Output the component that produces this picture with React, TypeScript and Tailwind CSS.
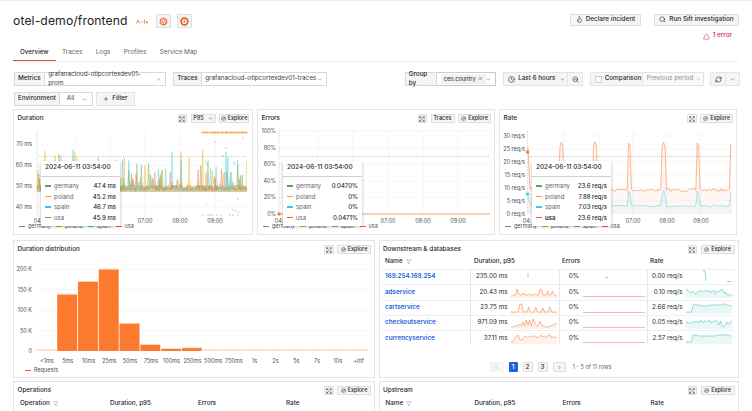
import React from "react";
import { ChevronDown, ChevronLeft, ChevronRight, Clock, Compass, Expand, Filter, Flame, Plus, RefreshCw, Search, Triangle, X, ZoomOut } from "lucide-react";

const C = { germany: "#56a64b", poland: "#f2a900", spain: "#38c5e0", usa: "#f2691f" };

function rng(seed: number) {
  let s = seed;
  return () => {
    s = (s * 16807) % 2147483647;
    return (s - 1) / 2147483646;
  };
}

function Compact({ label }: { label: string }) {
  return <span className="flex h-full items-center bg-[#f4f5f5] border border-[#d8d9dc] px-[3px] text-[6.3px] font-medium text-[#24292e]">{label}</span>;
}

function PanelBtn({ label, compass, caret, w }: { label: string; compass?: boolean; caret?: boolean; w: string }) {
  return (
    <span className={`flex h-[9.5px] items-center justify-center gap-[2px] rounded-[1px] border border-[#dcdde0] bg-[#f4f5f5] text-[5.5px] font-medium text-[#24292e] ${w}`}>
      {compass && <Compass size={5} strokeWidth={2} />}
      {label}
      {caret && <ChevronDown size={5} strokeWidth={2} className="ml-[2px]" />}
    </span>
  );
}

function ExpandBtn() {
  return (
    <span className="flex h-[9.5px] w-[9.5px] items-center justify-center rounded-[1px] border border-[#dcdde0] bg-[#f4f5f5] text-[#24292e]">
      <Expand size={6} strokeWidth={2} />
    </span>
  );
}

function PanelHead({ title, children }: { title: string; children: React.ReactNode }) {
  return (
    <div className="flex h-[14px] items-center justify-between pl-[3.5px] pr-[3px] pt-[3px]">
      <span className="text-[6.4px] font-medium text-[#24292e]">{title}</span>
      <div className="flex items-center gap-[3.5px]">{children}</div>
    </div>
  );
}

function Legend({ items }: { items: [string, string][] }) {
  return (
    <div className="flex h-[9px] items-center gap-[5px] pl-[5px] text-[5.5px] text-[#4a4f57]">
      {items.map(([n, c]) => (
        <span key={n} className="flex items-center gap-[3px]">
          <span className="h-[1px] w-[6px]" style={{ background: c }} />
          {n}
        </span>
      ))}
    </div>
  );
}

const SERIES: [string, string][] = [
  ["germany", C.germany],
  ["poland", C.poland],
  ["spain", C.spain],
  ["usa", C.usa],
];

function Tip({ left, rows, boldLast }: { left: string; rows: [string, string, string][]; boldLast?: boolean }) {
  return (
    <div className={`absolute top-[51px] h-[65px] w-[79px] bg-white shadow-[0_0.5px_3px_rgba(0,0,0,0.3)] ${left}`}>
      <div className="flex h-[15.5px] items-center border-b border-[#cfd0d3] pl-[4px] text-[6.4px] font-medium text-[#24292e]">2024-06-11 03:54:00</div>
      <div className="flex flex-col pt-[4px]">
        {rows.map(([n, c, v], i) => (
          <div key={n} className="flex h-[10.6px] items-center px-[4px] text-[6px]">
            <span className="mr-[3px] h-[1.5px] w-[6px]" style={{ background: c }} />
            <span className={boldLast && i === 3 ? "font-semibold text-[#24292e]" : "text-[#5f646c]"}>{n}</span>
            <span className="ml-auto font-medium text-[#24292e]">{v}</span>
          </div>
        ))}
      </div>
    </div>
  );
}

function Grid({ ys, xs, x0, x1, y0, y1 }: { ys: number[]; xs: number[]; x0: number; x1: number; y0: number; y1: number }) {
  return (
    <g stroke="#f0f0f2" strokeWidth="0.6">
      {ys.map((y) => <line key={y} x1={x0} x2={x1} y1={y} y2={y} />)}
      {xs.map((x) => <line key={x} x1={x} x2={x} y1={y0} y2={y1} />)}
    </g>
  );
}

function tick(x: number, y: number, t: string, anchor: "middle" | "end" = "middle") {
  return <text key={t + x + y} x={x} y={y} fontSize="5.5" fill="#4a4f57" textAnchor={anchor}>{t}</text>;
}

function durationSeries(seed: number, x0: number, x1: number, base: number, amp: number) {
  const r = rng(seed);
  const pts: [number, number][] = [];
  for (let x = x0; x <= x1; x += 0.9) {
    const v = r();
    let y = base + (r() - 0.5) * 6;
    if (v > 0.84) y -= r() * amp;
    pts.push([x, y]);
  }
  return pts;
}

function DurationChart() {
  const s: [string, number, number][] = [
    [C.germany, 11, 26],
    [C.poland, 29, 38],
    [C.spain, 47, 42],
    [C.usa, 83, 22],
  ];
  const r = rng(5);
  const stops = [] as [number, number, string][];
  for (let i = 0; i < 34; i++) stops.push([201 + i * 1.35, 132.5, i % 3 ? C.poland : C.usa]);
  const scatter: [number, number, string][] = [
    [214, 142, C.germany], [225, 148, C.usa], [222, 156, C.germany], [204, 162, C.germany], [206, 164, C.germany],
    [233, 162, C.spain], [233, 164, C.germany], [242, 138, C.usa], [205, 205, C.poland], [219, 200, C.poland],
    [237, 199, C.usa], [232, 210, C.germany], [235, 211, C.germany], [238, 212, C.usa],
    [201, 215, C.poland], [203, 215, C.poland], [207, 215, C.germany], [209, 215, C.germany], [211, 215, C.germany],
    [216, 215, C.germany], [220, 215, C.spain], [229, 215, C.usa], [232, 215, C.usa], [237, 215, C.spain],
  ];
  return (
    <svg className="block" width="240" height="93" viewBox="13 124 240 93" fontFamily="Inter">
      <Grid ys={[144, 165, 186, 207]} xs={[74, 109, 144, 179, 214]} x0={36} x1={246} y0={131} y1={216} />
      <line x1="36" x2="36" y1="131" y2="216" stroke="#b5b5b8" strokeWidth="0.6" strokeDasharray="1 1" />
      {tick(31, 146, "70 ms", "end")}{tick(31, 167, "60 ms", "end")}{tick(31, 188, "50 ms", "end")}{tick(31, 209, "40 ms", "end")}
      {s.map(([c, seed, amp]) => {
        const pts = durationSeries(seed, 36, 246, 188, amp);
        const line = pts.map((p) => p.join(",")).join(" ");
        return (
          <g key={c}>
            <polygon points={`36,192 ${line} 246,192`} fill={c} fillOpacity="0.16" />
            <polyline points={line} fill="none" stroke={c} strokeWidth="0.45" strokeOpacity="0.8" />
          </g>
        );
      })}
      <line x1="38" x2="246" y1="156.5" y2="156.5" stroke="#a9a9ad" strokeWidth="0.6" strokeDasharray="1 1" />
      {stops.map(([x, y, c], i) => <circle key={i} cx={x} cy={y} r="0.9" fill={c} fillOpacity={0.5 + r() * 0.4} />)}
      {scatter.map(([x, y, c], i) => <circle key={i} cx={x} cy={y} r="0.7" fill={c} fillOpacity="0.6" />)}
    </svg>
  );
}

function XTicks({ items, pad }: { items: [string, number][]; pad: number }) {
  return (
    <svg className="block" width="240" height="10" viewBox={`${pad} 217 240 10`} fontFamily="Inter">
      {items.map(([t, x]) => tick(x, 223, t))}
    </svg>
  );
}

function ErrorsChart() {
  return (
    <svg className="block" width="238" height="93" viewBox="257 124 238 93" fontFamily="Inter">
      <Grid ys={[131, 148, 164, 181, 197]} xs={[317, 352, 388, 422, 457]} x0={278} x1={489} y0={131} y1={214} />
      <line x1="278" x2="278" y1="131" y2="214" stroke="#b5b5b8" strokeWidth="0.6" strokeDasharray="1 1" />
      {tick(275, 133, "100%", "end")}{tick(275, 150, "80%", "end")}{tick(275, 166, "60%", "end")}{tick(275, 183, "40%", "end")}{tick(275, 199, "20%", "end")}{tick(275, 216, "0%", "end")}
      <line x1="279" x2="489" y1="156.5" y2="156.5" stroke="#a9a9ad" strokeWidth="0.6" strokeDasharray="1 1" />
      <line x1="278" x2="489" y1="214" y2="214" stroke={C.usa} strokeWidth="0.8" strokeOpacity="0.8" />
      <circle cx="278" cy="214" r="1.8" fill={C.usa} fillOpacity="0.8" />
    </svg>
  );
}

function rateLine(seed: number, base: number, spike: number, jitter: number) {
  const r = rng(seed);
  const pts: string[] = [];
  const spikes = [561.5, 595, 629, 663.5, 697.5, 731.5];
  pts.push(`528,${spike + 5}`, `530,${base - 2}`);
  for (let x = 532; x <= 732; x += 1.4) {
    const near = spikes.find((s) => Math.abs(s - x) < 1.6);
    const y = near ? spike + Math.abs(near - x) * 3 : base + (r() - 0.5) * jitter;
    pts.push(`${x},${y}`);
  }
  return pts;
}

function RateChart() {
  const o = rateLine(7, 190, 142, 3);
  const t = rateLine(19, 206, 190, 1.6);
  return (
    <svg className="block" width="238" height="93" viewBox="500 124 238 93" fontFamily="Inter">
      <Grid ys={[136, 149, 162, 175, 188, 201]} xs={[564, 599, 633, 667, 701]} x0={528} x1={732} y0={131} y1={214} />
      <line x1="527.5" x2="527.5" y1="131" y2="214" stroke="#b5b5b8" strokeWidth="0.6" strokeDasharray="1 1" />
      {["30", "25", "20", "15", "10", "5", "0"].map((v, i) => tick(525, 138 + i * 13, `${v} req/s`, "end"))}
      <line x1="529" x2="732" y1="156.5" y2="156.5" stroke="#a9a9ad" strokeWidth="0.6" strokeDasharray="1 1" />
      <polygon points={`528,214 ${t.join(" ")} 732,214`} fill={C.spain} fillOpacity="0.05" />
      <polygon points={`528,214 ${o.join(" ")} 732,214`} fill={C.usa} fillOpacity="0.05" />
      <polyline points={t.join(" ")} fill="none" stroke={C.spain} strokeWidth="0.55" strokeOpacity="0.8" />
      <polyline points={o.join(" ")} fill="none" stroke={C.usa} strokeWidth="0.6" strokeOpacity="0.8" />
      <circle cx="527.5" cy="152" r="1.8" fill={C.usa} fillOpacity="0.8" />
      <circle cx="527.5" cy="194" r="1.8" fill={C.spain} fillOpacity="0.8" />
    </svg>
  );
}

function Histogram() {
  const v = [0.5, 138, 169, 199, 67, 15, 5, 7, 1.5, 0.8, 0.8, 0.8, 0.4, 0.4, 0.4, 0.4];
  const l = ["<1ms", "5ms", "10ms", "25ms", "50ms", "75ms", "100ms", "250ms", "500ms", "750ms", "1s", "2s", "5s", "7s", "10s", "+Inf"];
  const bw = 20.78;
  return (
    <svg className="block" width="362" height="111" viewBox="13 256 362 111" fontFamily="Inter">
      <Grid ys={[270, 290.5, 311, 331.5]} xs={[]} x0={35} x1={367} y0={0} y1={0} />
      {["200 K", "150 K", "100 K", "50 K", "0"].map((t, i) => tick(31, 272 + i * 20.5, t, "end"))}
      {v.map((n, i) => {
        const h = n * 0.41;
        return (
          <g key={i}>
            <rect x={35 + i * bw + 0.4} y={352 - Math.max(h, 1)} width={bw - 0.8} height={Math.max(h, 1)} fill={n < 2 ? "#fde4d6" : "#fb7a2e"} />
            <rect x={35 + i * bw + 0.4} y={352 - Math.max(h, 1) - 0.7} width={bw - 0.8} height={0.7} fill="#fdcdb2" />
          </g>
        );
      })}
      {l.map((t, i) => tick(35 + i * bw + bw / 2 + 0.5, 363.5, t))}
    </svg>
  );
}

function Spark({ d, color, w = 46, fill = true }: { d: number[]; color: string; w?: number; fill?: boolean }) {
  const step = w / (d.length - 1);
  const pts = d.map((y, i) => `${(i * step).toFixed(1)},${y}`).join(" ");
  return (
    <svg className="block shrink-0" width={w} height="12" viewBox={`0 0 ${w} 12`}>
      {fill && <polygon points={`0,12 ${pts} ${w},12`} fill={color} fillOpacity="0.12" />}
      <polyline points={pts} fill="none" stroke={color} strokeWidth="0.6" />
    </svg>
  );
}

function Empty() {
  return <span className="block h-[12px] w-[46px] shrink-0" />;
}

const ORANGE = "#f58a4e";
const TEAL = "#4ec7b8";
const PINK = "#f6b6c8";

const rows = [
  { n: "169.254.169.254", d: "235.00 ms", r: "0.00 req/s", ds: null, es: null, rs: null },
  { n: "adservice", d: "20.43 ms", r: "0.10 req/s", ds: [10, 10, 9, 9, 3, 8, 9, 9, 7, 9, 9, 9, 8, 9, 9, 9, 8, 9, 9, 3, 4, 9, 9, 9, 5, 9, 9, 5, 8, 10, 10], es: 1, rs: [3, 4, 6, 7, 5, 7, 8, 6, 5, 4, 6, 5, 4, 6, 4, 7, 5, 4, 8, 5, 6, 4, 3, 7, 6, 9, 8, 10, 9] },
  { n: "cartservice", d: "23.75 ms", r: "2.66 req/s", ds: [10, 10, 10, 10, 10, 2, 2, 10, 10, 10, 5, 10, 10, 10, 5, 10, 10, 10, 6, 10, 10, 10, 5, 10, 10, 10, 10], es: 1, rs: [10, 10, 10, 10, 3, 2, 3, 3, 3, 4, 4, 4, 3, 4, 3, 3, 3, 3, 3, 3, 3, 2, 2, 3, 3, 4, 4] },
  { n: "checkoutservice", d: "971.09 ms", r: "0.05 req/s", ds: [10, 10, 9, 9, 9, 7, 9, 5, 9, 3, 8, 3, 9, 2, 6, 9, 9, 4, 8, 9, 10, 10, 10, 9, 8, 8, 7, 6], es: 1, rs: [4, 6, 7, 5, 6, 4, 6, 4, 6, 3, 6, 4, 4, 5, 3, 6, 4, 5, 3, 5, 8, 4, 9, 10, 8, 5, 7, 6, 3] },
  { n: "currencyservice", d: "37.11 ms", r: "2.57 req/s", ds: [10, 10, 7, 4, 3, 7, 9, 6, 4, 5, 5, 4, 5, 4, 4, 6, 5, 3, 5, 4, 6, 3, 3, 6, 5, 5, 6], es: 1, rs: [10, 10, 10, 10, 3, 3, 3, 4, 4, 4, 4, 4, 4, 4, 4, 4, 4, 3, 3, 3, 3, 3, 3, 3, 3, 4, 4] },
];

function TableHead({ first, cols, filter }: { first: string; cols: string; filter?: boolean }) {
  return (
    <div className={`grid h-[14px] items-center text-[6.3px] font-medium text-[#24292e] ${cols}`}>
      <span className="flex items-center gap-[2px] pl-[2px]">{first}<Filter size={5.5} strokeWidth={1.5} className="ml-[1px] text-[#6b7077]" /></span>
      <span className="pl-[4px]">Duration, p95</span>
      <span className="pl-[3px]">Errors</span>
      <span className="pl-[3px]">Rate</span>
    </div>
  );
}

function Downstream() {
  const cols = "grid-cols-[87px_89px_88px_88px]";
  return (
    <div className="relative h-full px-[3.5px]">
      <TableHead first="Name" cols={cols} />
      {rows.map((r, i) => (
        <div key={r.n} className={`grid h-[15.3px] items-center border-t border-[#eeeef0] text-[6.3px] ${cols}`}>
          <span className="pl-[2px] font-semibold text-[#1f62e0]">{r.n}</span>
          <span className="flex h-full items-center justify-end gap-[3.5px] border-l border-[#e6e6e9] pr-[2px] text-[#24292e]">
            {r.d}
            {r.ds ? <Spark d={r.ds} color={ORANGE} /> : (
              <svg className="shrink-0" width="46" height="12" viewBox="0 0 46 12"><rect x="16.5" y="2" width="1" height="4" fill="#f9b48d" /></svg>
            )}
          </span>
          <span className="flex h-full items-center justify-end gap-[3.5px] border-l border-[#e6e6e9] pr-[2.5px] text-[#24292e]">
            0%
            {r.es ? <svg className="shrink-0" width="62" height="12" viewBox="0 0 62 12"><line x1="0" x2="62" y1="10.5" y2="10.5" stroke={PINK} strokeWidth="1" /></svg> : (
              <svg className="shrink-0" width="62" height="12" viewBox="0 0 62 12"><rect x="22" y="6" width="3" height="1" fill="#f8a5bd" /></svg>
            )}
          </span>
          <span className="flex h-full items-center justify-end gap-[3.5px] border-l border-[#e6e6e9] pr-[3px] text-[#24292e]">
            {r.r}
            {r.rs ? <Spark d={r.rs} color={TEAL} /> : (
              <svg className="shrink-0" width="46" height="14" viewBox="0 0 46 14"><polyline points="17,1 19,1 20,11" fill="none" stroke={TEAL} strokeWidth="0.7" /><line x1="41" x2="45" y1="11.5" y2="11.5" stroke={TEAL} strokeWidth="0.7" /></svg>
            )}
          </span>
        </div>
      ))}
      <div className="mt-[17px] flex items-center justify-center gap-[5px] pr-[16px] text-[6.3px] font-medium text-[#24292e]">
        <span className="flex h-[10px] w-[14px] items-center justify-center bg-[#f4f5f5] text-[#9a9ca1]"><ChevronLeft size={5} /></span>
        <span className="flex h-[10px] w-[9px] items-center justify-center rounded-[1px] bg-[#1f62e0] text-white">1</span>
        <span className="flex h-[10px] w-[10px] items-center justify-center rounded-[1px] border border-[#dcdde0] bg-[#f4f5f5]">2</span>
        <span className="flex h-[10px] w-[10px] items-center justify-center rounded-[1px] border border-[#dcdde0] bg-[#f4f5f5]">3</span>
        <span className="flex h-[10px] w-[13px] items-center justify-center rounded-[1px] border border-[#dcdde0] bg-[#f4f5f5]"><ChevronRight size={5} /></span>
        <span className="ml-[2px] font-normal text-[#5f646c] text-[5.6px]">1 - 5 of 11 rows</span>
      </div>
    </div>
  );
}

function K8s() {
  const spokes = [0, 51.4, 102.8, 154.3, 205.7, 257.1, 308.6];
  return (
    <svg width="9" height="9" viewBox="0 0 24 24" fill="none" stroke="#f05a28">
      <polygon points="12,1.5 20.5,5.5 22.5,14.5 17,22 7,22 1.5,14.5 3.5,5.5" fill="#f05a28" stroke="none" />
      <circle cx="12" cy="12" r="6" stroke="#fff" strokeWidth="1.6" />
      {spokes.map((a) => <line key={a} x1="12" y1="12" x2="12" y2="3.5" stroke="#fff" strokeWidth="1.3" transform={`rotate(${a} 12 12)`} />)}
    </svg>
  );
}

function Ring() {
  return (
    <svg width="9" height="9" viewBox="0 0 24 24" fill="none">
      <circle cx="12" cy="12" r="9" stroke="#f05a28" strokeWidth="4.5" />
      <circle cx="12" cy="12" r="2.6" fill="#f05a28" />
    </svg>
  );
}

function Asserts() {
  return (
    <svg width="12" height="5" viewBox="0 0 24 10" fill="none" stroke="#f4732a" strokeWidth="1.6">
      <polyline points="1,9 4,2 7,9" />
      <polyline points="9,7 11,5 13,7 15,5" />
      <line x1="17" y1="1" x2="17" y2="9" />
      <polyline points="20,9 22,4 23.5,8" />
    </svg>
  );
}

function ControlRow() {
  return (
    <div className="flex h-[14px] items-center text-[6.3px] text-[#24292e]">
      <div className="flex h-full items-stretch">
        <Compact label="Metrics" />
        <span className="flex w-[121px] items-center justify-between border border-l-0 border-[#d8d9dc] pl-[3.5px] pr-[4px] text-[#3a3f46]">grafanacloud-otlpcortexdev01-prom<ChevronDown size={5} /></span>
      </div>
      <div className="ml-[7.5px] flex h-full items-stretch">
        <Compact label="Traces" />
        <span className="flex w-[125px] items-center justify-between border border-l-0 border-[#d8d9dc] pl-[3.5px] pr-[4px] text-[#3a3f46]">grafanacloud-otlpcortexdev01-traces<ChevronDown size={5} /></span>
      </div>
      <div className="ml-[78px] flex h-full items-stretch">
        <Compact label="Group by" />
        <span className="flex w-[65px] items-center justify-between border border-l-0 border-[#c9cacd] pl-[3.5px] pr-[4px]">
          <span className="flex items-center gap-[2px] rounded-[1px] bg-[#f1f1f3] px-[3px] py-[0.5px] text-[5.6px]">ceo.country<X size={5} /></span>
          <ChevronDown size={5} />
        </span>
      </div>
      <div className="ml-[7px] flex h-full items-stretch font-medium">
        <span className="flex w-[65px] items-center gap-[3px] bg-[#f4f5f5] border border-[#e3e4e6] pl-[4px]"><Clock size={7} />Last 6 hours<ChevronDown size={5} className="ml-[2px]" /></span>
        <span className="flex w-[15px] items-center justify-center bg-[#f4f5f5] border border-l-0 border-[#e3e4e6]"><ZoomOut size={7} /></span>
      </div>
      <div className="ml-[7px] flex h-full items-stretch">
        <span className="flex w-[53px] items-center gap-[3px] bg-[#f4f5f5] border border-[#e3e4e6] pl-[3.5px] font-medium">
          <span className="h-[7px] w-[7px] rounded-[1px] border border-[#c9cacd] bg-white" />Comparison
        </span>
        <span className="flex w-[61px] items-center gap-[3px] border border-l-0 border-[#e3e4e6] bg-[#fafafa] pl-[3.5px] text-[#8a8d93]">Previous period<ChevronDown size={5} /></span>
      </div>
      <div className="ml-[6px] flex h-full items-stretch">
        <span className="flex w-[16px] items-center justify-center bg-[#f4f5f5] border border-[#e3e4e6]"><RefreshCw size={7} /></span>
        <span className="flex w-[14px] items-center justify-center bg-[#f4f5f5] border border-l-0 border-[#e3e4e6]"><ChevronDown size={5} /></span>
      </div>
    </div>
  );
}

function MiniPanel({ title, first, cols, filter }: { title: string; first: string; cols: string; filter?: boolean }) {
  return (
    <div className="h-[40px] overflow-hidden border border-[#e6e6e9] bg-white">
      <PanelHead title={title}>
        <ExpandBtn />
        <PanelBtn label="Explore" compass w="w-[34px]" />
      </PanelHead>
      <div className="mt-[1px] px-[4px]">
        <TableHead first={first} cols={cols} filter={filter} />
      </div>
    </div>
  );
}

export default function App() {
  return (
    <div className="h-[411px] w-[752px] overflow-hidden border-t border-[#eeeeee] bg-white pl-[13px] pr-[13px] font-['Inter',sans-serif] text-[#24292e]">
      <div className="flex h-[40px] justify-between pt-[13px]">
        <div className="flex h-[14px] items-center">
          <h1 className="text-[12.2px] font-normal leading-none tracking-[0.1px] text-[#1c2024]">otel-demo/frontend</h1>
          <span className="ml-[8px]"><Asserts /></span>
          <span className="ml-[8px] flex h-[14px] w-[15px] items-center justify-center rounded-[1px] border border-[#dcdde0] bg-[#f4f5f5]"><K8s /></span>
          <span className="ml-[6px] flex h-[14px] w-[15px] items-center justify-center rounded-[1px] border border-[#dcdde0] bg-[#f4f5f5]"><Ring /></span>
        </div>
        <div className="flex flex-col items-end">
          <div className="flex h-[14px] items-center gap-[13px] text-[6.4px] font-medium text-[#24292e]">
            <span className="flex h-full w-[71px] items-center justify-center gap-[3px] rounded-[1px] border border-[#dcdde0] bg-[#f4f5f5]"><Flame size={7} />Declare incident</span>
            <span className="flex h-full w-[85px] items-center justify-center gap-[3px] rounded-[1px] border border-[#dcdde0] bg-[#f4f5f5]"><Search size={7} />Run Sift investigation</span>
          </div>
          <span className="mr-[7px] mt-[5.5px] flex items-center gap-[3px] text-[6.4px] font-medium text-[#e0226e]"><Triangle size={7} />1 error</span>
        </div>
      </div>
      <div className="flex h-[21px] items-end gap-[13.5px] border-b border-[#eeeeef] pl-[7px] text-[6.3px] text-[#5f646c]">
        <span className="relative pb-[4px] font-medium text-[#24292e]">
          Overview
          <span className="absolute -left-[7px] -right-[7px] bottom-0 h-[1px] bg-[#ee4a30]" />
        </span>
        <span className="pb-[4px]">Traces</span>
        <span className="pb-[4px]">Logs</span>
        <span className="pb-[4px]">Profiles</span>
        <span className="pb-[4px]">Service Map</span>
      </div>
      <div className="mt-[10px] pl-[1px]">
        <ControlRow />
      </div>
      <div className="mt-[6px] flex h-[14px] items-stretch pl-[1px] text-[6.3px]">
        <Compact label="Environment" />
        <span className="flex w-[33px] items-center justify-between border border-l-0 border-[#d8d9dc] pl-[7px] pr-[5px] text-[#3a3f46]">All<ChevronDown size={5} /></span>
        <span className="ml-[3px] flex w-[39px] items-center justify-center gap-[3px] border border-[#e3e4e6] bg-[#f4f5f5] font-medium"><Plus size={6} />Filter</span>
      </div>

      <div className="mt-[3px] grid grid-cols-[240px_238px_238px] gap-x-[4px]">
        <div className="relative h-[126px] border border-[#e6e6e9] bg-white">
          <PanelHead title="Duration">
            <ExpandBtn />
            <PanelBtn label="P95" caret w="w-[25px]" />
            <PanelBtn label="Explore" compass w="w-[30px]" />
          </PanelHead>
          <DurationChart />
          <XTicks pad={13} items={[["04:", 37], ["07:00", 144], ["08:00", 179], ["09:00", 214]]} />
          <div className="-mt-[5px]"><Legend items={SERIES} /></div>
          <Tip left="left-[27px]" rows={[["germany", C.germany, "47.4 ms"], ["poland", C.poland, "45.2 ms"], ["spain", C.spain, "46.7 ms"], ["usa", C.usa, "45.9 ms"]]} />
        </div>
        <div className="relative h-[126px] border border-[#e6e6e9] bg-white">
          <PanelHead title="Errors">
            <ExpandBtn />
            <PanelBtn label="Traces" w="w-[24px]" />
            <PanelBtn label="Explore" compass w="w-[33px]" />
          </PanelHead>
          <ErrorsChart />
          <XTicks pad={257} items={[["04:", 278], ["07:00", 387], ["08:00", 422], ["09:00", 457]]} />
          <div className="-mt-[5px]"><Legend items={SERIES} /></div>
          <Tip left="left-[25px]" rows={[["germany", C.germany, "0.0470%"], ["poland", C.poland, "0%"], ["spain", C.spain, "0%"], ["usa", C.usa, "0.0471%"]]} />
        </div>
        <div className="relative h-[126px] border border-[#e6e6e9] bg-white">
          <PanelHead title="Rate">
            <ExpandBtn />
            <PanelBtn label="Explore" compass w="w-[33px]" />
          </PanelHead>
          <RateChart />
          <XTicks pad={500} items={[["04:", 527], ["07:00", 633], ["08:00", 667], ["09:00", 701]]} />
          <div className="-mt-[5px]"><Legend items={SERIES} /></div>
          <Tip left="left-[32px]" boldLast rows={[["germany", C.germany, "23.6 req/s"], ["poland", C.poland, "7.88 req/s"], ["spain", C.spain, "7.03 req/s"], ["usa", C.usa, "23.6 req/s"]]} />
        </div>
      </div>

      <div className="mt-[5px] grid grid-cols-[362px_360px] gap-x-[3.5px] gap-y-[3px]">
        <div className="h-[138px] border border-[#e6e6e9] bg-white">
          <PanelHead title="Duration distribution">
            <ExpandBtn />
            <PanelBtn label="Explore" compass w="w-[34px]" />
          </PanelHead>
          <Histogram />
          <div className="pl-[6px]"><Legend items={[["Requests", C.usa]]} /></div>
        </div>
        <div className="h-[138px] border border-[#e6e6e9] bg-white">
          <PanelHead title="Downstream & databases">
            <ExpandBtn />
            <PanelBtn label="Explore" compass w="w-[34px]" />
          </PanelHead>
          <Downstream />
        </div>
        <MiniPanel title="Operations" first="Operation" cols="grid-cols-[88px_89px_88px_88px]" />
        <MiniPanel title="Upstream" first="Name" cols="grid-cols-[87px_89px_88px_88px]" />
      </div>
    </div>
  );
}
